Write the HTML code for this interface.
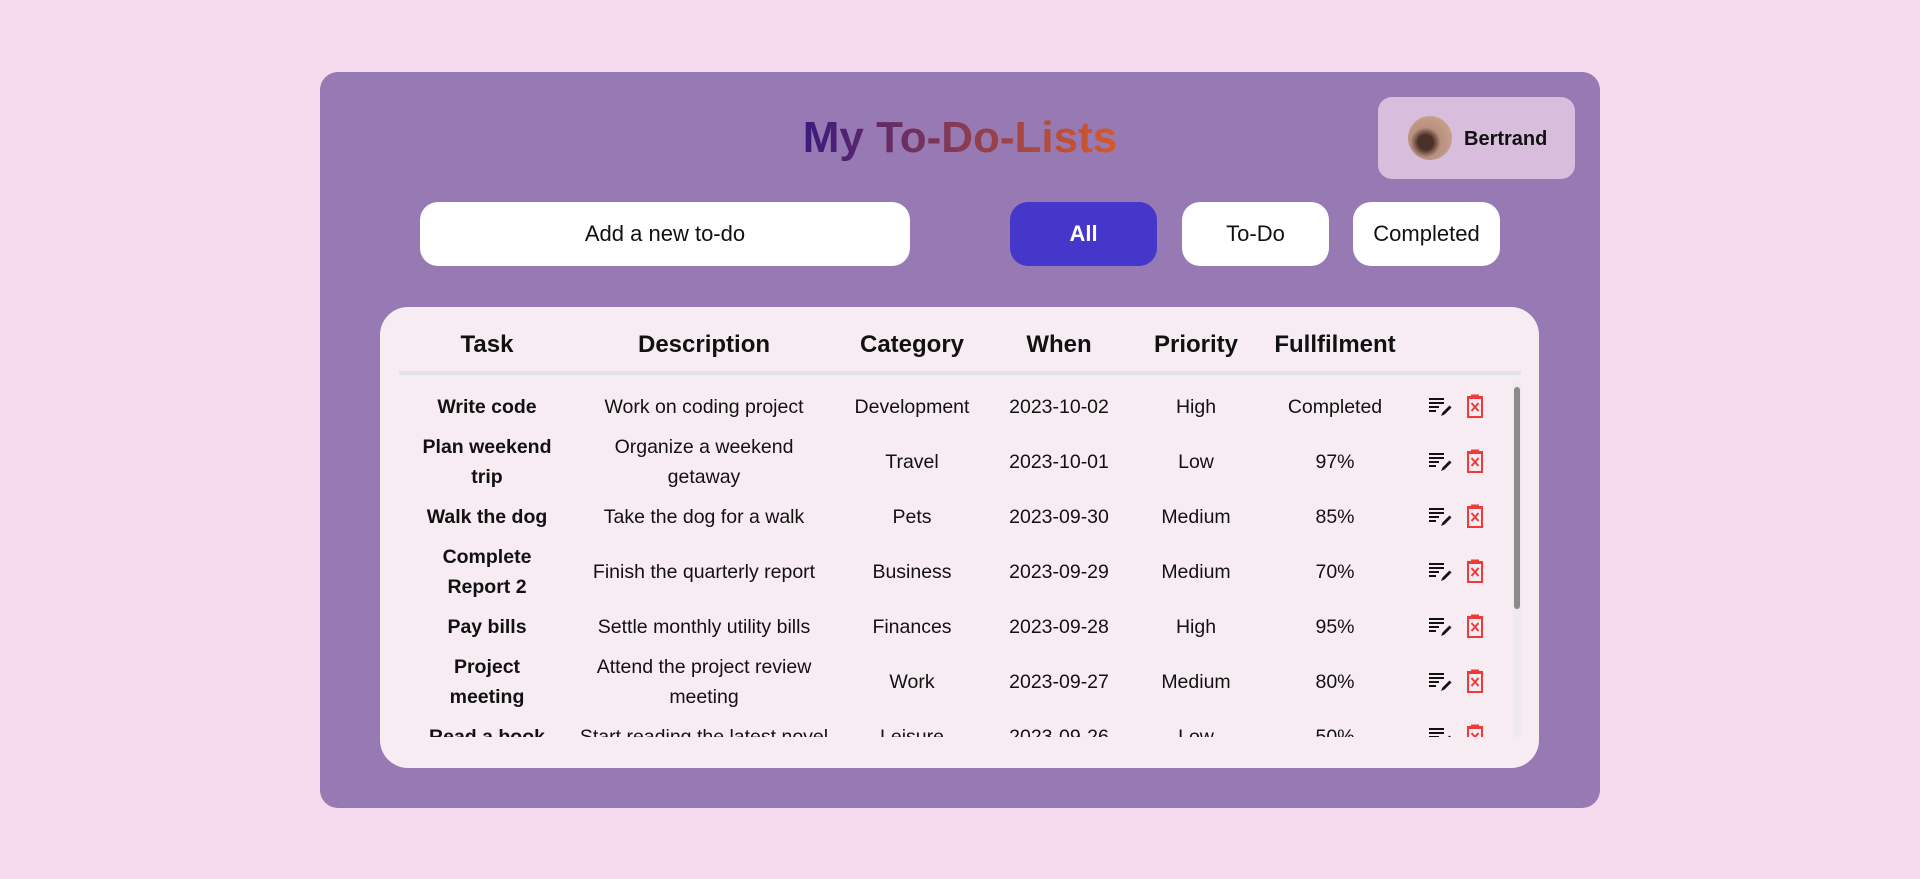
<!DOCTYPE html>
<html><head><meta charset="utf-8"><style>
*{box-sizing:border-box;margin:0;padding:0}
body{width:1920px;height:879px;background:#f5d9ec;font-family:"Liberation Sans",Arial,sans-serif;position:relative;overflow:hidden;color:#111}
.card{position:absolute;left:320px;top:72px;width:1280px;height:736px;background:#9779b4;border-radius:18px}
h1{position:absolute;left:0;width:1920px;top:113px;text-align:center;font-size:44px;font-weight:bold;}
h1 span{background:linear-gradient(90deg,#3a1a7c,#d65a28);-webkit-background-clip:text;background-clip:text;color:transparent}
.user{position:absolute;left:1378px;top:97px;width:197px;height:82px;background:#d9bddc;border-radius:14px}
.av{position:absolute;left:30px;top:19px;width:44px;height:44px;border-radius:50%;background:radial-gradient(circle at 40% 60%,#4a3028 0 20%,#b98f7d 40%,#d2ad9a 100%)}
.user b{position:absolute;left:86px;top:31px;font-size:20px}
.inp{position:absolute;left:420px;top:202px;width:490px;height:64px;background:#fff;border-radius:18px;text-align:center;line-height:64px;font-size:22px}
.btn{position:absolute;top:202px;width:147px;height:64px;background:#fff;border-radius:18px;text-align:center;line-height:64px;font-size:22px}
.tbl{position:absolute;left:380px;top:307px;width:1159px;height:461px;background:#f8ecf3;border-radius:28px;overflow:hidden}
.c{position:absolute;text-align:center;white-space:nowrap}
.hd{position:absolute;top:23px;font-size:24px;font-weight:bold;line-height:30px}
.div{position:absolute;left:19px;top:64px;width:1122px;height:4px;background:#e2e3e5}
.body{position:absolute;left:0;top:76px;width:1159px;height:354px;overflow:hidden}
.row{position:absolute;left:0;width:1159px;font-size:19.5px;line-height:30px}
.row .c{top:50%;transform:translateY(-50%)}
.sb{position:absolute;left:1133px;top:76px;width:8px;height:354px;background:#efeaee}
.th{position:absolute;left:1px;top:4px;width:6px;height:222px;background:#8b8b8b;border-radius:3px}
</style></head><body>
<div class="card"></div>
<h1><span>My To-Do-Lists</span></h1>
<div class="user"><div class="av"></div><b>Bertrand</b></div>
<div class="inp">Add a new to-do</div>
<div class="btn" style="left:1010px;background:#4437c9;color:#fff;font-weight:bold">All</div>
<div class="btn" style="left:1182px">To-Do</div>
<div class="btn" style="left:1353px">Completed</div>
<div class="tbl">
 <div class="hd c" style="left:19px;width:176px">Task</div>
 <div class="hd c" style="left:195px;width:258px">Description</div>
 <div class="hd c" style="left:453px;width:158px">Category</div>
 <div class="hd c" style="left:611px;width:136px">When</div>
 <div class="hd c" style="left:747px;width:138px">Priority</div>
 <div class="hd c" style="left:885px;width:140px">Fullfilment</div>
 <div class="div"></div>
 <div class="body" id="b"></div>
 <div class="sb"><div class="th"></div></div>
</div>
<script>
var rows=[["Write code","Work on coding project","Development","2023-10-02","High","Completed",48],
["Plan weekend<br>trip","Organize a weekend<br>getaway","Travel","2023-10-01","Low","97%",62],
["Walk the dog","Take the dog for a walk","Pets","2023-09-30","Medium","85%",48],
["Complete<br>Report 2","Finish the quarterly report","Business","2023-09-29","Medium","70%",62],
["Pay bills","Settle monthly utility bills","Finances","2023-09-28","High","95%",48],
["Project<br>meeting","Attend the project review<br>meeting","Work","2023-09-27","Medium","80%",62],
["Read a book","Start reading the latest novel","Leisure","2023-09-26","Low","50%",48]];
var edit='<svg width="26" height="24" viewBox="0 0 26 24"><path d="M1 5h15M1 9h15M1 13h10M1 17h7" stroke="#111" stroke-width="2"/><path d="M13 22l1.5-3.5 7-7 2 2-7 7z" fill="#111"/></svg>';
var del='<svg width="22" height="26" viewBox="0 0 22 26"><path d="M3 3h16M8 3V1.5h6V3M4 4h14v19H4z" fill="none" stroke="#f03a3a" stroke-width="2"/><path d="M7.5 9l7 8M14.5 9l-7 8" stroke="#f03a3a" stroke-width="2"/></svg>';
var y=0,h='',L=[[19,176],[195,258],[453,158],[611,136],[747,138],[885,140]];
rows.forEach(function(r){h+='<div class="row" style="top:'+y+'px;height:'+r[6]+'px">';
for(var i=0;i<6;i++)h+='<div class="c" style="left:'+L[i][0]+'px;width:'+L[i][1]+'px;'+(i==0?'font-weight:bold':'')+'">'+r[i]+'</div>';
h+='<div class="c" style="left:1040px;width:74px;display:flex;gap:10px;justify-content:center">'+edit+del+'</div></div>';y+=r[6];});
document.getElementById('b').innerHTML=h;
</script>
</body></html>
